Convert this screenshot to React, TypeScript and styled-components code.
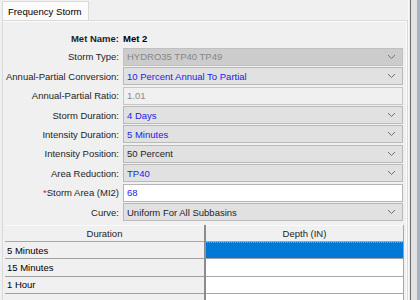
import styled, { createGlobalStyle } from "styled-components";

const Global = createGlobalStyle`
  html, body { margin: 0; padding: 0; background: #f0f0f0; }
  body { font-family: "Liberation Sans", Arial, sans-serif; font-size: 9.5px; color: #000; }
`;

type Field = {
  label: string;
  value: string;
  kind: "disabled" | "combo" | "readonly" | "input";
  blue?: boolean;
  required?: boolean;
};

const fields: Field[] = [
  { label: "Storm Type:", value: "HYDRO35 TP40 TP49", kind: "disabled" },
  { label: "Annual-Partial Conversion:", value: "10 Percent Annual To Partial", kind: "combo", blue: true },
  { label: "Annual-Partial Ratio:", value: "1.01", kind: "readonly" },
  { label: "Storm Duration:", value: "4 Days", kind: "combo", blue: true },
  { label: "Intensity Duration:", value: "5 Minutes", kind: "combo", blue: true },
  { label: "Intensity Position:", value: "50 Percent", kind: "combo" },
  { label: "Area Reduction:", value: "TP40", kind: "combo", blue: true },
  { label: "Storm Area (MI2)", value: "68", kind: "input", blue: true, required: true },
  { label: "Curve:", value: "Uniform For All Subbasins", kind: "combo" },
];

const durations = ["5 Minutes", "15 Minutes", "1 Hour", "2 Hours", "3 Hours", "6 Hours"];

function Chevron() {
  return (
    <svg width="9" height="6" viewBox="0 0 9 6">
      <path d="M1 1 L4.5 4.5 L8 1" fill="none" stroke="#707070" strokeWidth="1" />
    </svg>
  );
}

export default function App() {
  return (
    <>
      <Global />
      <Window>
        <Main>
          <TabStrip>
            <Tab>Frequency Storm</Tab>
          </TabStrip>
          <Panel>
            <Form>
              <Label $bold>Met Name:</Label>
              <MetValue>Met 2</MetValue>
              {fields.map((f) => (
                <Row key={f.label} f={f} />
              ))}
            </Form>
            <Grid>
              <thead>
                <tr>
                  <Head>Duration</Head>
                  <Head>Depth (IN)</Head>
                </tr>
              </thead>
              <tbody>
                {durations.map((d, i) => (
                  <tr key={d}>
                    <KeyCell>{d}</KeyCell>
                    <ValueCell $selected={i === 0}></ValueCell>
                  </tr>
                ))}
              </tbody>
            </Grid>
          </Panel>
        </Main>
        <Edge>
          <EdgeLine />
        </Edge>
      </Window>
    </>
  );
}

function Row({ f }: { f: Field }) {
  return (
    <>
      <Label>
        {f.required && <Star>*</Star>}
        {f.label}
      </Label>
      <Box $kind={f.kind} $blue={!!f.blue}>
        <span>{f.value}</span>
        {(f.kind === "combo" || f.kind === "disabled") && <Chevron />}
      </Box>
    </>
  );
}

const Window = styled.div`
  display: flex;
  width: 420px;
  height: 300px;
  overflow: hidden;
`;

const Main = styled.div`
  flex: 1;
  min-width: 0;
  display: flex;
  flex-direction: column;
  padding-left: 2px;
`;

const TabStrip = styled.div`
  flex: 0 0 auto;
  display: flex;
  height: 19px;
  padding-top: 1px;
`;

const Tab = styled.div`
  padding: 0 6px 0 5px;
  display: flex;
  align-items: center;
  background: #fbfbfb;
  border: 1px solid #d9d9d9;
  border-bottom: none;
  font-size: 9.6px;
`;

const Panel = styled.div`
  flex: 1 0 auto;
  background: #f0f0f0;
  border: 1px solid #d9d9d9;
  box-shadow: inset 0 1px 0 #fcfcfc, inset -1px 0 0 #fcfcfc;
  padding: 9px 4px 0 0;
  display: flex;
  flex-direction: column;
`;

const Form = styled.div`
  display: grid;
  grid-template-columns: 116px 1fr;
  column-gap: 4px;
  row-gap: 1.4px;
  grid-auto-rows: 18px;
  grid-template-rows: 16.5px;
`;

const Label = styled.div<{ $bold?: boolean }>`
  display: flex;
  align-items: center;
  justify-content: flex-end;
  white-space: nowrap;
  color: #1e1e1e;
  font-weight: ${(p) => (p.$bold ? 700 : 400)};
`;

const MetValue = styled.div`
  display: flex;
  align-items: center;
  font-weight: 700;
`;

const Star = styled.span`
  color: #e02020;
`;

const boxColors = {
  disabled: { bg: "#cccccc", border: "#c0c0c0", text: "#878787" },
  combo: { bg: "#e1e1e1", border: "#b9b9b9", text: "#1e1e1e" },
  readonly: { bg: "#f0f0f0", border: "#c6c6c6", text: "#8a8a8a" },
  input: { bg: "#ffffff", border: "#b5b5b5", text: "#1e1e1e" },
};

const Box = styled.div<{ $kind: Field["kind"]; $blue: boolean }>`
  display: flex;
  align-items: center;
  justify-content: space-between;
  padding: 0 6px 0 3px;
  background: ${(p) => boxColors[p.$kind].bg};
  border: 1px solid ${(p) => boxColors[p.$kind].border};
  color: ${(p) => (p.$blue ? "#1a1aee" : boxColors[p.$kind].text)};
  white-space: nowrap;
`;

const Grid = styled.table`
  margin: 4px 0 0 2px;
  width: 399px;
  border-collapse: collapse;
  table-layout: fixed;
`;

const Head = styled.th`
  height: 15px;
  padding: 0;
  font-weight: 400;
  color: #1e1e1e;
  text-align: center;
  background: #f0f0f0;
  border-top: 1px solid #fafafa;
  border-bottom: 1px solid #a8a8a8;
  border-right: 1px solid #a8a8a8;
  &:first-child {
    width: 199px;
    border-right: 2px solid #8c8c8c;
  }
`;

const KeyCell = styled.td`
  height: 16.4px;
  padding: 0 0 0 2px;
  background: #f0f0f0;
  border-bottom: 1px solid #a0a0a0;
  border-right: 2px solid #8c8c8c;
`;

const ValueCell = styled.td<{ $selected: boolean }>`
  padding: 0;
  background: ${(p) => (p.$selected ? "#0078d7" : "#ffffff")};
  border-bottom: 1px solid #a8a8a8;
  border-right: 1px solid #a8a8a8;
  outline: ${(p) => (p.$selected ? "1px dotted #d08a40" : "none")};
  outline-offset: -1px;
`;

const Edge = styled.div`
  flex: 0 0 11px;
  background: #e9e9e9;
  display: flex;
  justify-content: flex-end;
  border-left: 1px solid #fafafa;
`;

const EdgeLine = styled.div`
  width: 6px;
  border-left: 1px solid #6a6a6a;
  border-right: 3px solid #9fb2c6;
  background: #e2e2e2;
`;
